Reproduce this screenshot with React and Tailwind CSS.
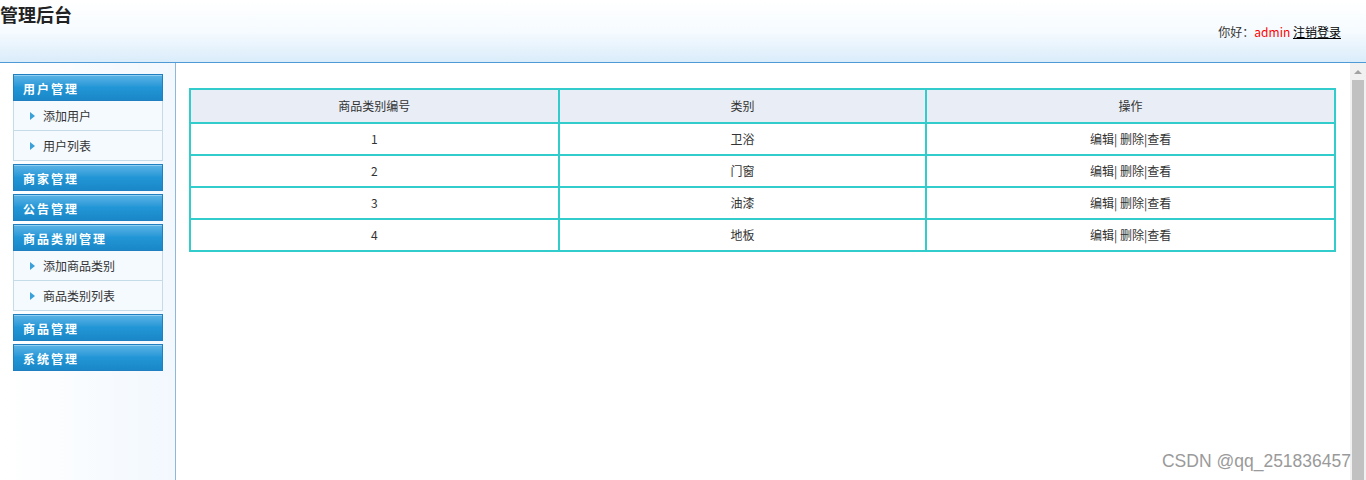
import { useState } from 'react'

const menus = [
  { title: '用户管理', items: ['添加用户', '用户列表'] },
  { title: '商家管理', items: [] },
  { title: '公告管理', items: [] },
  { title: '商品类别管理', items: ['添加商品类别', '商品类别列表'] },
  { title: '商品管理', items: [] },
  { title: '系统管理', items: [] },
]

const rows = [
  { id: 1, name: '卫浴' },
  { id: 2, name: '门窗' },
  { id: 3, name: '油漆' },
  { id: 4, name: '地板' },
]

const cjk = { fontFamily: '"Noto Sans CJK SC", "Microsoft YaHei", sans-serif' }

function MenuGroup({ title, items }) {
  return (
    <div className="mb-[3px]">
      <div className="flex h-[27px] items-center border border-[#1f7fc0] bg-gradient-to-b from-[#5ab4e6] via-[#2196d6] to-[#1a87c8] pl-[9px] pt-[2px] text-[12px] font-bold tracking-[2px] text-white shadow-[inset_0_1px_0_#8fd0f2]">
        {title}
      </div>
      {items.length > 0 && (
        <div className="border-x border-[#c6dbe8] bg-[#f5faff]">
          {items.map((item) => (
            <div
              key={item}
              className="flex h-[30px] items-center border-b border-[#c6dbe8] pl-[16px] text-[12px] text-[#333]"
            >
              <span className="mr-[8px] h-0 w-0 border-y-[4px] border-l-[5px] border-y-transparent border-l-[#3aa0d8]" />
              {item}
            </div>
          ))}
        </div>
      )}
    </div>
  )
}

export default function App() {
  const [selected] = useState(null)

  return (
    <div className="relative flex h-[480px] flex-col overflow-hidden bg-white text-[#333]" style={cjk}>
      {/* top bar */}
      <div className="relative h-[63px] shrink-0 border-b border-[#4d9ad6] bg-gradient-to-b from-white via-[#f6fbff] to-[#daecfa]">
        <h1 className="pt-[2px] text-[18px] font-bold leading-[24px] text-[#222]">管理后台</h1>
        <div className="absolute right-[25px] top-[23px] text-[12px] leading-[18px] text-[#333]">
          你好：<span className="text-[#ff0000]">admin</span>{' '}
          <a href="#" className="text-black underline">注销登录</a>
        </div>
      </div>

      <div className="flex min-h-0 flex-1">
        {/* sidebar */}
        <div className="w-[176px] shrink-0 border-r border-[#8fb8d8] bg-gradient-to-r from-white to-[#f2f8fe] pl-[13px] pr-[12px] pt-[11px]">
          {menus.map((m) => (
            <MenuGroup key={m.title} {...m} />
          ))}
        </div>

        {/* main */}
        <div className="min-w-0 flex-1 pl-[13px] pr-[14px] pt-[25px]">
          <table className="w-full table-fixed border-collapse text-center text-[12px] text-[#333]">
            <thead>
              <tr className="h-[34px] bg-[#e9eef6]">
                <th className="w-[32.2%] border-2 border-[#33cccc] font-normal">商品类别编号</th>
                <th className="w-[32.1%] border-2 border-[#33cccc] font-normal">类别</th>
                <th className="border-2 border-[#33cccc] font-normal">操作</th>
              </tr>
            </thead>
            <tbody>
              {rows.map((r) => (
                <tr key={r.id} className={`h-[32px] ${selected === r.id ? 'bg-[#f5faff]' : ''}`}>
                  <td className="border-2 border-[#33cccc]">{r.id}</td>
                  <td className="border-2 border-[#33cccc]">{r.name}</td>
                  <td className="border-2 border-[#33cccc]">
                    编辑|&nbsp;删除|查看
                  </td>
                </tr>
              ))}
            </tbody>
          </table>
        </div>

        {/* scrollbar */}
        <div className="flex w-[16px] shrink-0 flex-col items-center bg-[#f1f1f1]">
          <div className="flex h-[17px] items-center justify-center">
            <span className="h-0 w-0 border-x-[4px] border-b-[4px] border-x-transparent border-b-[#a3a3a3]" />
          </div>
          <div className="w-[12px] flex-1 bg-[#c1c1c1]" />
        </div>
      </div>

      <div
        className="absolute bottom-[6px] right-[15px] text-[17.5px] text-[#9a9a9a]"
        style={{ fontFamily: '"Liberation Sans", Arial, sans-serif' }}
      >
        CSDN @qq_251836457
      </div>
    </div>
  )
}
